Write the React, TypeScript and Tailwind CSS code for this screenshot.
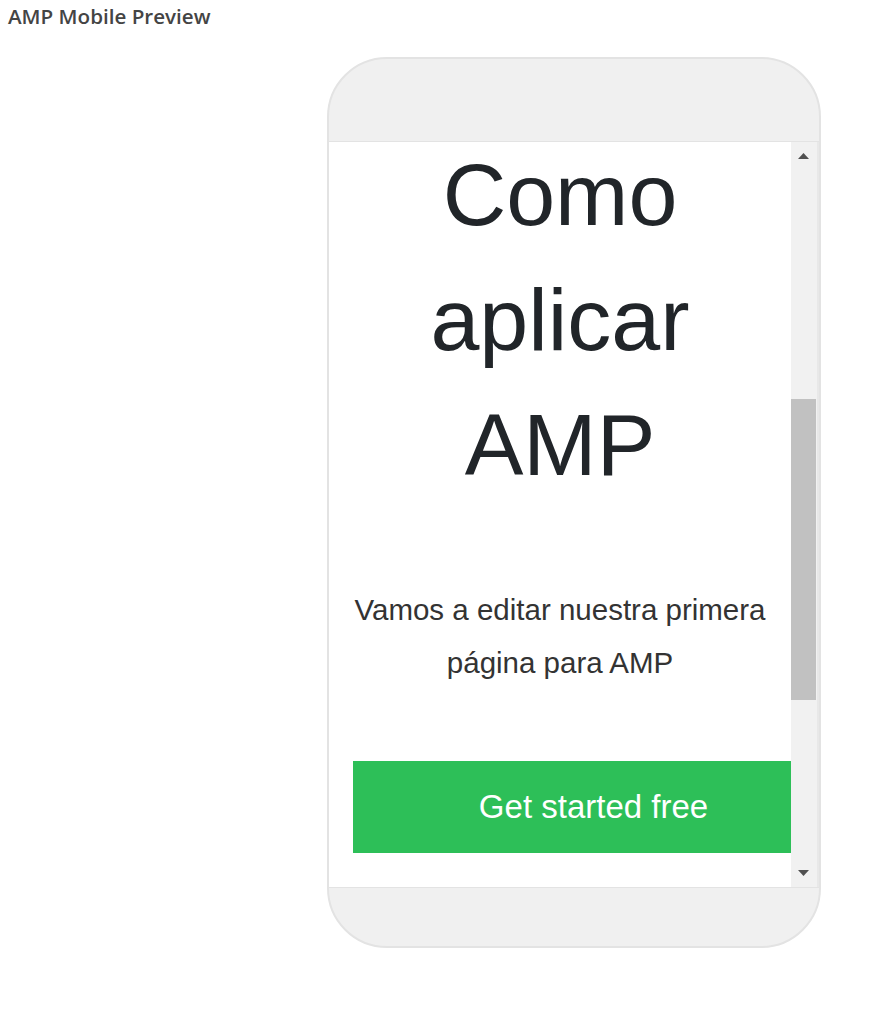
export default function App() {
  return (
    <div className="min-h-screen bg-white">
      <div
        className="pl-[8px] pt-[3px] text-[20.6px] leading-[26px] font-semibold text-[#444444]"
        style={{ fontFamily: '"Open Sans", "Noto Sans", sans-serif' }}
      >
        AMP Mobile Preview
      </div>

      {/* phone shell */}
      <div className="ml-[327px] mt-[28px] flex h-[891px] w-[494px] flex-col overflow-hidden rounded-[60px] border-2 border-[#e3e3e3] bg-[#f0f0f0]">
        <div className="h-[82px] shrink-0" />

        <div
          className="flex h-[747px] shrink-0 border-y border-[#e3e3e3] bg-white"
          style={{ fontFamily: '"Liberation Sans", Arial, sans-serif' }}
        >
          <div className="w-[462px] shrink-0 overflow-hidden">
            <h1 className="-mt-[10px] text-center text-[88px] leading-[125px] font-normal text-[#212529]">
              Como
              <br />
              aplicar
              <br />
              AMP
            </h1>
            <p className="mt-[76px] text-center text-[29.5px] leading-[53px] text-[#333333]">
              Vamos a editar nuestra primera
              <br />
              página para AMP
            </p>
            <div className="ml-[24px] mt-[72px] flex h-[92px] w-[481px] items-center justify-center bg-[#2dbf58] text-[33px] text-white">
              Get started free
            </div>
          </div>

          {/* scrollbar */}
          <div className="flex w-[28px] shrink-0 flex-col border-r-2 border-[#e8e8e8] bg-[#f1f1f1]">
            <div className="flex h-[28px] items-center justify-center pr-[1px]">
              <svg width="11" height="6" viewBox="0 0 11 6">
                <path d="M5.5 0 L11 6 L0 6 Z" fill="#505050" />
              </svg>
            </div>
            <div className="mt-[229px] h-[301px] w-[25px] bg-[#c1c1c1]" />
            <div className="flex-1" />
            <div className="flex h-[28px] items-center justify-center pr-[1px]">
              <svg width="11" height="6" viewBox="0 0 11 6">
                <path d="M0 0 L11 0 L5.5 6 Z" fill="#505050" />
              </svg>
            </div>
          </div>
        </div>

        <div className="flex-1" />
      </div>
    </div>
  );
}
